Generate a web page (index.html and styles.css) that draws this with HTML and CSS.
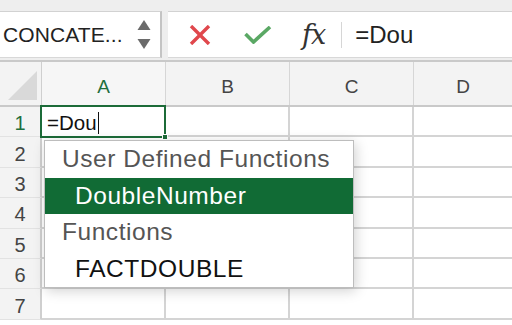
FILE: index.html
```html
<!DOCTYPE html>
<html>
<head>
<meta charset="utf-8">
<link rel="stylesheet" href="styles.css">
</head>
<body>
<div class="app">
  <div class="toolbar">
    <div class="namebox">
      <span class="name">CONCATE...</span>
      <span class="spin">
        <svg width="14" height="34" viewBox="0 0 14 34"><path d="M7 2 L13.5 12 L0.5 12 Z" fill="#6b6b6b"/><path d="M0.5 21 L13.5 21 L7 31 Z" fill="#6b6b6b"/></svg>
      </span>
    </div>
    <div class="formula">
      <span class="btn x"><svg width="22" height="20" viewBox="0 0 22 20"><path d="M2 1 L20 19 M20 1 L2 19" stroke="#e0474c" stroke-width="3.4" stroke-linecap="butt"/></svg></span>
      <span class="btn ok"><svg width="28" height="18" viewBox="0 0 28 18"><path d="M1.5 8 L9.5 16 L26 1" fill="none" stroke="#5aa864" stroke-width="3.6"/></svg></span>
      <span class="fx">fx</span>
      <span class="sep"></span>
      <span class="ftext">=Dou</span>
    </div>
  </div>
  <div class="sheet">
    <div class="hrow">
      <div class="corner"><svg width="30" height="30" viewBox="0 0 30 30"><path d="M29 0 L29 29 L0 29 Z" fill="#d9d9d9"/></svg></div>
      <div class="ch sel">A</div>
      <div class="ch">B</div>
      <div class="ch">C</div>
      <div class="ch last">D</div>
    </div>
    <div class="row"><div class="rh sel">1</div><div class="c active"><span class="ctext">=Dou</span><span class="caret"></span><span class="handle"></span></div><div class="c"></div><div class="c"></div><div class="c last"></div></div>
    <div class="row"><div class="rh">2</div><div class="c"></div><div class="c"></div><div class="c"></div><div class="c last"></div></div>
    <div class="row"><div class="rh">3</div><div class="c"></div><div class="c"></div><div class="c"></div><div class="c last"></div></div>
    <div class="row"><div class="rh">4</div><div class="c"></div><div class="c"></div><div class="c"></div><div class="c last"></div></div>
    <div class="row"><div class="rh">5</div><div class="c"></div><div class="c"></div><div class="c"></div><div class="c last"></div></div>
    <div class="row"><div class="rh">6</div><div class="c"></div><div class="c"></div><div class="c"></div><div class="c last"></div></div>
    <div class="row"><div class="rh">7</div><div class="c"></div><div class="c"></div><div class="c"></div><div class="c last"></div></div>
    <div class="popup">
      <div class="item group">User Defined Functions</div>
      <div class="item fn hi">DoubleNumber</div>
      <div class="item group">Functions</div>
      <div class="item fn">FACTDOUBLE</div>
    </div>
  </div>
</div>
</body>
</html>
```
FILE: styles.css
```css
* { box-sizing: border-box; }
html, body { margin: 0; padding: 0; }
body {
  width: 512px; height: 325px; overflow: hidden;
  font-family: "Liberation Sans", Arial, sans-serif;
  background: #fff;
}
.app { width: 512px; height: 325px; overflow: hidden; }
.toolbar {
  height: 62px;
  background: #eeeeee;
  padding-top: 11px;
  display: flex;
  gap: 6px;
  border-bottom: 2px solid #c9c9c9;
}
.namebox {
  width: 162px; height: 47px;
  background: #fff;
  border-top: 1px solid #d2d2d2;
  border-right: 2px solid #c4c4c4;
  border-bottom: 1px solid #d8d8d8;
  display: flex; align-items: center;
  padding-left: 3px;
}
.name { font-size: 21px; color: #222; flex: 1; letter-spacing: 0.1px; }
.spin { width: 14px; margin-right: 9px; display: flex; }
.formula {
  flex: 1; height: 47px;
  background: #fff;
  border-top: 1px solid #d2d2d2;
  border-bottom: 1px solid #d8d8d8;
  display: flex; align-items: center;
  padding-left: 21px;
}
.btn { display: flex; }
.x { margin-right: 33px; }
.ok { margin-right: 30px; }
.fx {
  font-family: "DejaVu Serif", "Liberation Serif", serif;
  font-style: italic; font-size: 27px; color: #333;
  margin-right: 16px; letter-spacing: -1px;
}
.sep { width: 1px; height: 26px; background: #d6d6d6; margin-right: 13px; }
.ftext { font-size: 24px; color: #222; }

.sheet { position: relative; }
.hrow { display: flex; height: 45px; border-bottom: 2px solid #c9c9c9; background: #f3f3f3; }
.corner { width: 42px; border-right: 1px solid #cfcfcf; display: flex; align-items: flex-end; justify-content: flex-end; padding: 0 3px 4px 0; }
.ch {
  width: 124px; border-right: 1px solid #d6d6d6;
  display: flex; align-items: center; justify-content: center;
  padding-top: 7px;
  font-size: 19px; color: #444;
}
.ch.sel { color: #1f6f3d; background: #f6f6f6; }
.ch.last { flex: 1; border-right: none; }
.row { display: flex; height: 30.4px; }
.rh {
  width: 42px; background: #f3f3f3; border-right: 2px solid #cfcfcf;
  border-bottom: 1px solid #e2e2e2;
  display: flex; align-items: center; justify-content: center;
  padding-top: 4px;
  font-size: 20px; color: #444;
}
.rh.sel { color: #1f6f3d; }
.c { width: 124px; border-right: 2px solid #d4d4d4; border-bottom: 2px solid #d4d4d4; }
.c.last { flex: 1; border-right: none; }
.c.active {
  position: relative;
  border: 2px solid #1c6b38;
  margin-left: -2px; width: 126px;
  margin-top: -2px; height: 33px;
  display: flex; align-items: center; padding-left: 5px; padding-top: 3px;
}
.ctext { font-size: 20.5px; color: #111; }
.caret { width: 1.5px; height: 22px; background: #111; margin-left: 1px; }
.handle { position: absolute; right: -4px; bottom: -4px; width: 6px; height: 6px; background: #1c6b38; border: 1px solid #fff; }

.popup {
  position: absolute; left: 44px; top: 78px;
  width: 310px;
  background: #fff;
  border: 1px solid #bdbdbd;
  box-shadow: 2px 3px 12px rgba(0,0,0,0.18);
}
.item { height: 36.5px; display: flex; align-items: center; font-size: 24.5px; letter-spacing: 0.55px; }
.group { padding-left: 17px; color: #555; }
.fn { padding-left: 30px; color: #111; }
.fn.hi { background: #116b35; color: #fff; }
```
